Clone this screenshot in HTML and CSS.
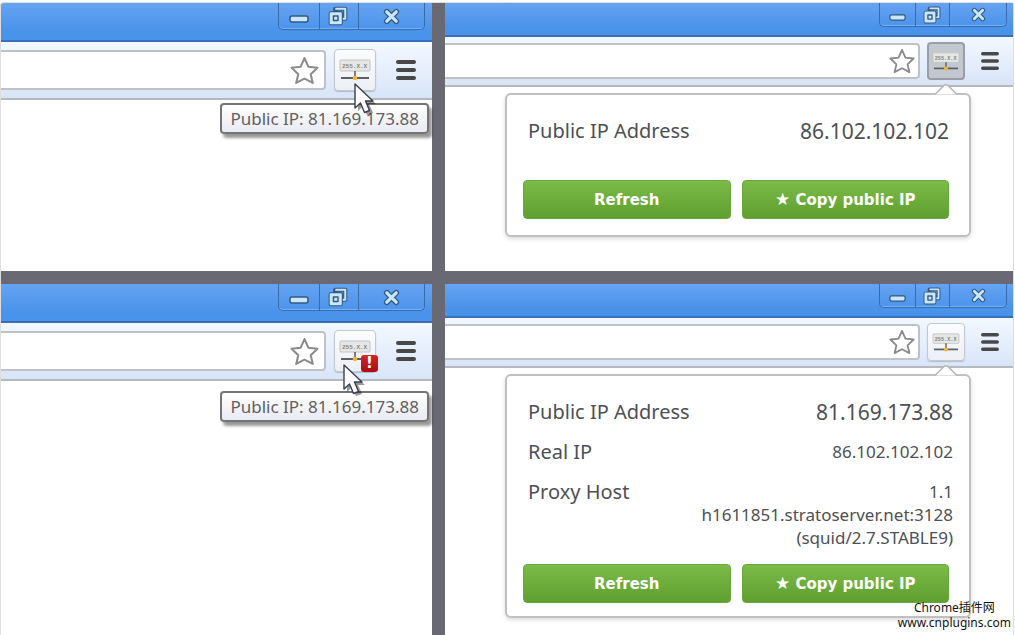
FILE: index.html
```html
<!DOCTYPE html>
<html lang="en">
<head>
  <meta charset="UTF-8">
  <title>Public IP Address</title>
  <link rel="stylesheet" href="styles.css">
</head>
<body>
  <!-- Shared icons -->
  <svg class="sprite" aria-hidden="true">
    <symbol id="icon-minimize" viewBox="0 0 20 8">
      <rect x="1" y="1" width="18" height="6" rx="2" fill="#c9e6fb" stroke="#33597f" stroke-width="1.5"/>
    </symbol>
    <symbol id="icon-restore" viewBox="0 0 22 22">
      <g fill="none" stroke-linejoin="round">
        <path d="M8 3h11v11h-5V8H8z" stroke="#33597f" stroke-width="4.6"/>
        <path d="M8 3h11v11h-4" stroke="#c9e6fb" stroke-width="2.2"/>
        <rect x="3" y="8" width="11" height="11" fill="#c9e6fb" stroke="#33597f" stroke-width="4.6"/>
        <rect x="3" y="8" width="11" height="11" fill="#c9e6fb" stroke="#c9e6fb" stroke-width="2.4"/>
        <rect x="6" y="11" width="5" height="5" fill="#c9e6fb" stroke="#33597f" stroke-width="1.6"/>
      </g>
    </symbol>
    <symbol id="icon-close" viewBox="0 0 18 18">
      <path d="M4 4l10 10M14 4L4 14" stroke="#33597f" stroke-width="6" stroke-linecap="round"/>
      <path d="M4 4l10 10M14 4L4 14" stroke="#c9e6fb" stroke-width="3.4" stroke-linecap="round"/>
    </symbol>
    <symbol id="icon-star" viewBox="0 0 28 28">
      <path d="M14 2l3.700 8.300 8.800 1-6.500 6.300 2 8.400-8-4.200-8 4.200 2-8.400-6.500-6.300 8.800-1z" fill="#fff" stroke="#8b8b8b" stroke-width="2" stroke-linejoin="round"/>
    </symbol>
    <symbol id="icon-menu" viewBox="0 0 20 20">
      <path d="M2 2h16M2 10h16M2 18h16" stroke="#484848" stroke-width="4" stroke-linecap="round"/>
    </symbol>
    <symbol id="icon-network" viewBox="0 0 32 22">
      <rect x="1" y="1" width="30" height="11" rx="1" fill="#e6e6e4" stroke="#c4c4c2"/>
      <text x="3" y="9" class="icon-digits">255.X.X</text>
      <path d="M16 12v6" stroke="#555" stroke-width="1.500"/>
      <path d="M2 19h28" stroke="#5b6066" stroke-width="2"/>
      <circle cx="16" cy="19" r="2.300" fill="#f5b62e"/>
    </symbol>
    <symbol id="icon-cursor" viewBox="0 0 22 34">
      <path d="M4 4v24l5-5 4 9 6-2-4-9h7z" fill="#000" opacity=".4"/>
      <path d="M1 1v24l5.500-5 4 9.500 5-2-4-9.500H19z" fill="#fff" stroke="#383e50" stroke-width="1.400" stroke-linejoin="round"/>
    </symbol>
  </svg>

  <main class="gallery">
    <section class="pane">
      <div class="titlebar">
        <div class="window-controls">
          <button type="button" aria-label="Minimize"><svg class="minimize"><use href="#icon-minimize"/></svg></button>
          <button type="button" aria-label="Restore"><svg class="restore"><use href="#icon-restore"/></svg></button>
          <button type="button" aria-label="Close"><svg class="close"><use href="#icon-close"/></svg></button>
        </div>
      </div>
      <div class="toolbar">
        <div class="omnibox">
          <input type="text" aria-label="Address">
          <button type="button" class="star-btn" aria-label="Bookmark"><svg><use href="#icon-star"/></svg></button>
        </div>
        <div class="extension">
          <button type="button" class="extension-btn" aria-label="Public IP"><svg><use href="#icon-network"/></svg></button>
          <div class="tooltip" role="tooltip">Public IP: 81.169.173.88</div>
          <svg class="cursor"><use href="#icon-cursor"/></svg>
        </div>
        <button type="button" class="menu-btn" aria-label="Menu"><svg><use href="#icon-menu"/></svg></button>
      </div>
    </section>

    <section class="pane compact">
      <div class="titlebar">
        <div class="window-controls">
          <button type="button" aria-label="Minimize"><svg class="minimize"><use href="#icon-minimize"/></svg></button>
          <button type="button" aria-label="Restore"><svg class="restore"><use href="#icon-restore"/></svg></button>
          <button type="button" aria-label="Close"><svg class="close"><use href="#icon-close"/></svg></button>
        </div>
      </div>
      <div class="toolbar">
        <div class="omnibox">
          <input type="text" aria-label="Address">
          <button type="button" class="star-btn" aria-label="Bookmark"><svg><use href="#icon-star"/></svg></button>
        </div>
        <div class="extension">
          <button type="button" class="extension-btn pressed" aria-label="Public IP"><svg><use href="#icon-network"/></svg></button>
        </div>
        <button type="button" class="menu-btn" aria-label="Menu"><svg><use href="#icon-menu"/></svg></button>
      </div>
      <div class="popup">
        <svg class="popup-arrow" viewBox="0 0 22 11"><path d="M0 10.500L9.500 1h3L22 10.500" fill="#fff" stroke="#b5b5b5" stroke-width="1.500"/></svg>
        <dl class="details">
          <dt>Public IP Address</dt>
          <dd class="main-ip">86.102.102.102</dd>
        </dl>
        <div class="actions">
          <button type="button" class="btn">Refresh</button>
          <button type="button" class="btn"><span class="star">★</span> Copy public IP</button>
        </div>
      </div>
    </section>

    <section class="pane">
      <div class="titlebar">
        <div class="window-controls">
          <button type="button" aria-label="Minimize"><svg class="minimize"><use href="#icon-minimize"/></svg></button>
          <button type="button" aria-label="Restore"><svg class="restore"><use href="#icon-restore"/></svg></button>
          <button type="button" aria-label="Close"><svg class="close"><use href="#icon-close"/></svg></button>
        </div>
      </div>
      <div class="toolbar">
        <div class="omnibox">
          <input type="text" aria-label="Address">
          <button type="button" class="star-btn" aria-label="Bookmark"><svg><use href="#icon-star"/></svg></button>
        </div>
        <div class="extension alert">
          <button type="button" class="extension-btn" aria-label="Public IP"><svg><use href="#icon-network"/></svg></button>
          <span class="badge">!</span>
          <div class="tooltip" role="tooltip">Public IP: 81.169.173.88</div>
          <svg class="cursor"><use href="#icon-cursor"/></svg>
        </div>
        <button type="button" class="menu-btn" aria-label="Menu"><svg><use href="#icon-menu"/></svg></button>
      </div>
    </section>

    <section class="pane compact">
      <div class="titlebar">
        <div class="window-controls">
          <button type="button" aria-label="Minimize"><svg class="minimize"><use href="#icon-minimize"/></svg></button>
          <button type="button" aria-label="Restore"><svg class="restore"><use href="#icon-restore"/></svg></button>
          <button type="button" aria-label="Close"><svg class="close"><use href="#icon-close"/></svg></button>
        </div>
      </div>
      <div class="toolbar">
        <div class="omnibox">
          <input type="text" aria-label="Address">
          <button type="button" class="star-btn" aria-label="Bookmark"><svg><use href="#icon-star"/></svg></button>
        </div>
        <div class="extension">
          <button type="button" class="extension-btn" aria-label="Public IP"><svg><use href="#icon-network"/></svg></button>
        </div>
        <button type="button" class="menu-btn" aria-label="Menu"><svg><use href="#icon-menu"/></svg></button>
      </div>
      <div class="popup proxy">
        <svg class="popup-arrow" viewBox="0 0 22 11"><path d="M0 10.500L9.500 1h3L22 10.500" fill="#fff" stroke="#b5b5b5" stroke-width="1.500"/></svg>
        <dl class="details">
          <dt>Public IP Address</dt>
          <dd class="main-ip">81.169.173.88</dd>
          <dt>Real IP</dt>
          <dd>86.102.102.102</dd>
          <dt>Proxy Host</dt>
          <dd>1.1<br>h1611851.stratoserver.net:3128<br>(squid/2.7.STABLE9)</dd>
        </dl>
        <div class="actions">
          <button type="button" class="btn">Refresh</button>
          <button type="button" class="btn"><span class="star">★</span> Copy public IP</button>
        </div>
      </div>
    </section>
  </main>

  <div class="watermark">Chrome插件网<br>www.cnplugins.com</div>
</body>
</html>
```
FILE: styles.css
```css
* {
    box-sizing: border-box;
}

body {
    margin: 0;
    padding: 2px 1px 0 0;
    height: 100vh;
    overflow: hidden;
    display: flex;
    background: #fff;
    font-family: "Noto Sans", "Noto Sans CJK SC", sans-serif;
}

button {
    padding: 0;
    border: none;
    background: none;
    font-family: inherit;
    cursor: pointer;
}

svg {
    display: block;
}

.sprite {
    position: absolute;
    width: 0;
    height: 0;
}

/* Four browser windows separated by grey bars */
.gallery {
    flex: 1;
    display: grid;
    grid-template-columns: 431fr 568fr;
    grid-template-rows: 268fr 351fr;
    gap: 13px;
    background: #686973;
    border: 1px solid #dedede;
    border-bottom: none;
    border-radius: 4px 4px 0 0;
}

.pane {
    background: #fff;
    min-width: 0;
}

.pane:first-child,
.pane:first-child .titlebar {
    border-top-left-radius: 3px;
}

/* Title bar */
.titlebar {
    height: 39px;
    padding-right: 7px;
    display: flex;
    justify-content: flex-end;
    align-items: flex-start;
    background: linear-gradient(#66a3f2, #4a93ea 75%, #4992e8);
    border-bottom: 2px solid #386fb8;
}

.window-controls {
    height: 27px;
    display: grid;
    grid-template-columns: 40px 39px 66px;
    border: 1px solid #396aa9;
    border-top: none;
    border-radius: 0 0 5px 5px;
    box-shadow: inset 0 -1px 0 #78b1f6;
}

.window-controls button {
    display: flex;
    justify-content: center;
    align-items: center;
}

.window-controls button + button {
    border-left: 1px solid #396aa9;
}

.minimize {
    width: 20px;
    height: 8px;
    margin-top: 6px;
}

.restore {
    width: 20px;
    height: 20px;
    margin-right: 2px;
}

.close {
    width: 17px;
    height: 17px;
}

/* Toolbar */
.toolbar {
    height: 58px;
    padding-right: 16px;
    display: flex;
    align-items: center;
    background: linear-gradient(#f3f8ff, #d8e5f8);
    border-bottom: 2px solid #b5b9bf;
}

.omnibox {
    flex: 1;
    min-width: 0;
    height: 40px;
    margin-right: 8px;
    padding-right: 5px;
    display: flex;
    align-items: center;
    background: #fff;
    border: 2px solid #bec2c7;
    border-left: none;
    border-radius: 0 4px 4px 0;
}

.omnibox input {
    flex: 1;
    min-width: 0;
    border: none;
    outline: none;
    background: none;
}

.star-btn svg {
    width: 29px;
    height: 29px;
}

.extension {
    position: relative;
    margin-right: 20px;
}

.extension-btn {
    width: 42px;
    height: 42px;
    display: flex;
    justify-content: center;
    align-items: center;
    background: linear-gradient(#fbfcfe, #eceff4);
    border: 1px solid #c3c8d0;
    border-radius: 4px;
    box-shadow: 0 1px 1px #b4bac4;
}

.extension-btn svg {
    width: 32px;
    height: 22px;
}

.extension-btn.pressed {
    background: #c3c8cf;
    border: 2px solid #989ea8;
    box-shadow: none;
}

.icon-digits {
    font-family: "Liberation Mono", monospace;
    font-size: 6px;
    font-weight: bold;
    fill: #85857f;
}

.menu-btn svg {
    width: 20px;
    height: 22px;
}

.badge {
    position: absolute;
    right: -2px;
    bottom: 0;
    width: 17px;
    height: 17px;
    background: linear-gradient(#d2262b, #a90c14);
    border-radius: 3px;
    color: #fff;
    font-family: "DejaVu Sans", sans-serif;
    font-size: 15px;
    font-weight: bold;
    line-height: 17px;
    text-align: center;
}

.tooltip {
    position: absolute;
    top: 54px;
    right: -53px;
    padding: 0 8px;
    border: 2px solid #747474;
    border-radius: 4px;
    background: linear-gradient(#fff, #e9eaf3);
    box-shadow: 3px 4px 3px rgba(0, 0, 0, 0.4);
    color: #606060;
    font-size: 17px;
    line-height: 27px;
    white-space: nowrap;
}

.cursor {
    position: absolute;
    top: 34px;
    left: 20px;
    width: 22px;
    height: 34px;
}

.alert .tooltip {
    top: 61px;
}

.alert .cursor {
    left: 9px;
}

/* Smaller window chrome */
.compact .titlebar {
    height: 34px;
    padding-right: 6px;
}

.compact .window-controls {
    height: 24px;
    grid-template-columns: 35px 34px 57px;
}

.compact .minimize {
    width: 17px;
    height: 7px;
}

.compact .restore {
    width: 18px;
    height: 18px;
}

.compact .close {
    width: 15px;
    height: 15px;
}

.compact .toolbar {
    height: 50px;
    padding-right: 14px;
}

.compact .omnibox {
    height: 36px;
    margin-right: 7px;
    padding-right: 3px;
}

.compact .star-btn svg {
    width: 26px;
    height: 26px;
}

.compact .extension {
    margin-right: 16px;
}

.compact .extension-btn {
    width: 38px;
    height: 38px;
}

.compact .extension-btn svg {
    width: 28px;
    height: 19px;
}

.compact .menu-btn svg {
    width: 18px;
    height: 20px;
}

/* Extension popup */
.popup {
    position: relative;
    width: 466px;
    margin: 6px 42px 0 auto;
    padding: 16px 20px 16px 16px;
    background: #fff;
    border: 2px solid #c0c0c0;
    border-radius: 6px;
    box-shadow: 0 2px 4px rgba(0, 0, 0, 0.15);
}

.popup-arrow {
    position: absolute;
    top: -11px;
    right: 12px;
    width: 22px;
    height: 11px;
}

.details {
    min-height: 55px;
    margin: 0 0 14px;
    padding-left: 5px;
    display: grid;
    grid-template-columns: auto 1fr;
    align-content: start;
    color: #4d4f57;
    font-size: 20px;
    line-height: 40px;
}

.details dd {
    margin: 0;
    padding-top: 8px;
    font-size: 17px;
    line-height: 23px;
    text-align: right;
}

.details .main-ip {
    padding-top: 0;
    font-size: 21px;
    line-height: 40px;
}

.proxy {
    padding-bottom: 13px;
}

.proxy .details {
    margin-right: -4px;
    margin-bottom: 15px;
}

.actions {
    display: grid;
    grid-template-columns: 1fr 1fr;
    gap: 11px;
}

.btn {
    height: 39px;
    background: linear-gradient(#7bbb49, #5f9f2f);
    border: 1px solid #68a839;
    border-radius: 4px;
    color: #fff;
    font-family: "DejaVu Sans", sans-serif;
    font-size: 15px;
    font-weight: bold;
}

.btn .star {
    font-size: 17px;
    line-height: 1;
}

.watermark {
    position: absolute;
    right: 4px;
    bottom: 5px;
    color: #111;
    font-size: 12px;
    line-height: 15px;
    text-align: center;
}
```
